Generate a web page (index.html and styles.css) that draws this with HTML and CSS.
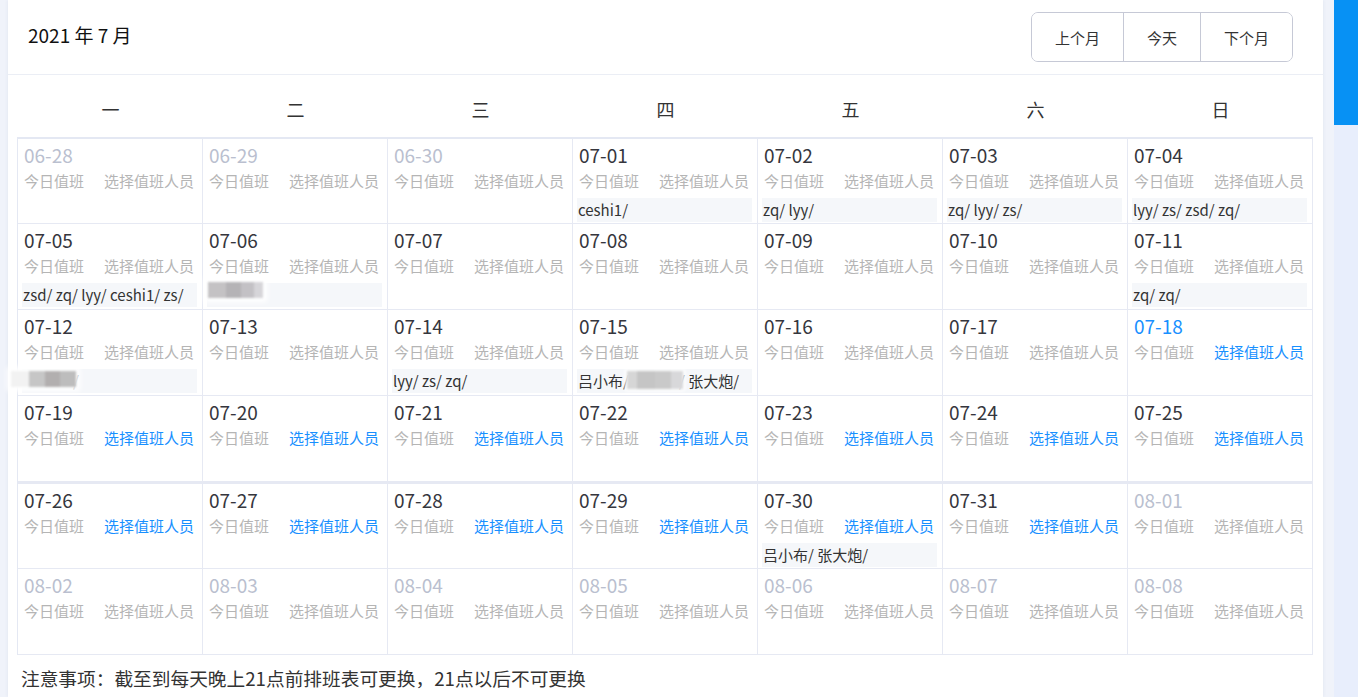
FILE: index.html
```html
<!DOCTYPE html>
<html lang="zh-CN">
<head>
<meta charset="utf-8">
<title>值班日历</title>
<link rel="stylesheet" href="styles.css">
</head>
<body>
<div class="page">
  <main class="card">
    <header class="card-head">
      <div class="title">2021 年 7 月</div>
      <div class="btn-group">
        <button class="btn">上个月</button>
        <button class="btn">今天</button>
        <button class="btn">下个月</button>
      </div>
    </header>
    <div class="card-body">
      <div class="weekdays">
        <div>一</div><div>二</div><div>三</div><div>四</div><div>五</div><div>六</div><div>日</div>
      </div>
      <div class="grid">
        <!-- row 1 -->
        <div class="cell other"><div class="date">06-28</div><div class="duty"><span>今日值班</span><span class="pick">选择值班人员</span></div></div>
        <div class="cell other"><div class="date">06-29</div><div class="duty"><span>今日值班</span><span class="pick">选择值班人员</span></div></div>
        <div class="cell other"><div class="date">06-30</div><div class="duty"><span>今日值班</span><span class="pick">选择值班人员</span></div></div>
        <div class="cell"><div class="date">07-01</div><div class="duty"><span>今日值班</span><span class="pick">选择值班人员</span></div><div class="names">ceshi1/</div></div>
        <div class="cell"><div class="date">07-02</div><div class="duty"><span>今日值班</span><span class="pick">选择值班人员</span></div><div class="names">zq/ lyy/</div></div>
        <div class="cell"><div class="date">07-03</div><div class="duty"><span>今日值班</span><span class="pick">选择值班人员</span></div><div class="names">zq/ lyy/ zs/</div></div>
        <div class="cell"><div class="date">07-04</div><div class="duty"><span>今日值班</span><span class="pick">选择值班人员</span></div><div class="names">lyy/ zs/ zsd/ zq/</div></div>
        <!-- row 2 -->
        <div class="cell"><div class="date">07-05</div><div class="duty"><span>今日值班</span><span class="pick">选择值班人员</span></div><div class="names">zsd/ zq/ lyy/ ceshi1/ zs/</div></div>
        <div class="cell"><div class="date">07-06</div><div class="duty"><span>今日值班</span><span class="pick">选择值班人员</span></div><div class="names"><span class="mosaic m1"></span></div></div>
        <div class="cell"><div class="date">07-07</div><div class="duty"><span>今日值班</span><span class="pick">选择值班人员</span></div></div>
        <div class="cell"><div class="date">07-08</div><div class="duty"><span>今日值班</span><span class="pick">选择值班人员</span></div></div>
        <div class="cell"><div class="date">07-09</div><div class="duty"><span>今日值班</span><span class="pick">选择值班人员</span></div></div>
        <div class="cell"><div class="date">07-10</div><div class="duty"><span>今日值班</span><span class="pick">选择值班人员</span></div></div>
        <div class="cell"><div class="date">07-11</div><div class="duty"><span>今日值班</span><span class="pick">选择值班人员</span></div><div class="names">zq/ zq/</div></div>
        <!-- row 3 -->
        <div class="cell"><div class="date">07-12</div><div class="duty"><span>今日值班</span><span class="pick">选择值班人员</span></div><div class="names"><span class="mosaic m2"></span><span class="tail">/</span></div></div>
        <div class="cell"><div class="date">07-13</div><div class="duty"><span>今日值班</span><span class="pick">选择值班人员</span></div></div>
        <div class="cell"><div class="date">07-14</div><div class="duty"><span>今日值班</span><span class="pick">选择值班人员</span></div><div class="names">lyy/ zs/ zq/</div></div>
        <div class="cell"><div class="date">07-15</div><div class="duty"><span>今日值班</span><span class="pick">选择值班人员</span></div><div class="names">吕小布/<span class="mosaic m3"></span>/ 张大炮/</div></div>
        <div class="cell"><div class="date">07-16</div><div class="duty"><span>今日值班</span><span class="pick">选择值班人员</span></div></div>
        <div class="cell"><div class="date">07-17</div><div class="duty"><span>今日值班</span><span class="pick">选择值班人员</span></div></div>
        <div class="cell today future"><div class="date">07-18</div><div class="duty"><span>今日值班</span><span class="pick">选择值班人员</span></div></div>
        <!-- row 4 -->
        <div class="cell future"><div class="date">07-19</div><div class="duty"><span>今日值班</span><span class="pick">选择值班人员</span></div></div>
        <div class="cell future"><div class="date">07-20</div><div class="duty"><span>今日值班</span><span class="pick">选择值班人员</span></div></div>
        <div class="cell future"><div class="date">07-21</div><div class="duty"><span>今日值班</span><span class="pick">选择值班人员</span></div></div>
        <div class="cell future"><div class="date">07-22</div><div class="duty"><span>今日值班</span><span class="pick">选择值班人员</span></div></div>
        <div class="cell future"><div class="date">07-23</div><div class="duty"><span>今日值班</span><span class="pick">选择值班人员</span></div></div>
        <div class="cell future"><div class="date">07-24</div><div class="duty"><span>今日值班</span><span class="pick">选择值班人员</span></div></div>
        <div class="cell future"><div class="date">07-25</div><div class="duty"><span>今日值班</span><span class="pick">选择值班人员</span></div></div>
        <!-- row 5 -->
        <div class="cell future"><div class="date">07-26</div><div class="duty"><span>今日值班</span><span class="pick">选择值班人员</span></div></div>
        <div class="cell future"><div class="date">07-27</div><div class="duty"><span>今日值班</span><span class="pick">选择值班人员</span></div></div>
        <div class="cell future"><div class="date">07-28</div><div class="duty"><span>今日值班</span><span class="pick">选择值班人员</span></div></div>
        <div class="cell future"><div class="date">07-29</div><div class="duty"><span>今日值班</span><span class="pick">选择值班人员</span></div></div>
        <div class="cell future"><div class="date">07-30</div><div class="duty"><span>今日值班</span><span class="pick">选择值班人员</span></div><div class="names">吕小布/ 张大炮/</div></div>
        <div class="cell future"><div class="date">07-31</div><div class="duty"><span>今日值班</span><span class="pick">选择值班人员</span></div></div>
        <div class="cell other"><div class="date">08-01</div><div class="duty"><span>今日值班</span><span class="pick">选择值班人员</span></div></div>
        <!-- row 6 -->
        <div class="cell other"><div class="date">08-02</div><div class="duty"><span>今日值班</span><span class="pick">选择值班人员</span></div></div>
        <div class="cell other"><div class="date">08-03</div><div class="duty"><span>今日值班</span><span class="pick">选择值班人员</span></div></div>
        <div class="cell other"><div class="date">08-04</div><div class="duty"><span>今日值班</span><span class="pick">选择值班人员</span></div></div>
        <div class="cell other"><div class="date">08-05</div><div class="duty"><span>今日值班</span><span class="pick">选择值班人员</span></div></div>
        <div class="cell other"><div class="date">08-06</div><div class="duty"><span>今日值班</span><span class="pick">选择值班人员</span></div></div>
        <div class="cell other"><div class="date">08-07</div><div class="duty"><span>今日值班</span><span class="pick">选择值班人员</span></div></div>
        <div class="cell other"><div class="date">08-08</div><div class="duty"><span>今日值班</span><span class="pick">选择值班人员</span></div></div>
      </div>
      <p class="note">注意事项：截至到每天晚上21点前排班表可更换，21点以后不可更换</p>
    </div>
  </main>
  <div class="scrollbar"><div class="thumb"></div></div>
</div>
</body>
</html>
```
FILE: styles.css
```css
* { box-sizing: border-box; }
html, body { margin: 0; height: 697px; overflow: hidden; }
body {
  background: #f0f3fa;
  font-family: "Noto Sans CJK SC", "Noto Sans", sans-serif;
  color: #333;
}
.page {
  display: flex;
  height: 697px;
  padding-left: 8px;
  gap: 11px;
}
.card {
  width: 1315px;
  flex: none;
  background: #fff;
  box-shadow: 0 0 4px rgba(40, 60, 120, 0.08);
}
.card-head {
  height: 75px;
  padding: 12px 30px 12px 20px;
  display: flex;
  align-items: center;
  justify-content: space-between;
  border-bottom: 1px solid #ebeef5;
}
.title {
  font-size: 19px;
  line-height: 26px;
  color: #111;
  margin-bottom: 4px;
}
.btn-group {
  display: flex;
  height: 50px;
  border: 1px solid #c6c9d6;
  border-radius: 7px;
  overflow: hidden;
}
.btn {
  font-family: inherit;
  font-size: 15px;
  color: #333;
  background: #fff;
  border: none;
  margin: 0;
  padding: 0 23px;
  cursor: pointer;
}
.btn + .btn { border-left: 1px solid #c6c9d6; }

.card-body { padding: 0 10px 0 9px; }
.weekdays {
  height: 62px;
  padding: 21px 0 0 1px;
  display: grid;
  grid-template-columns: repeat(7, 1fr);
  font-size: 18px;
  line-height: 26px;
  text-align: center;
  color: #333;
}
.grid {
  display: grid;
  grid-template-columns: repeat(7, 1fr);
  grid-template-rows: 85px 86px 86px 86px 87px 86px;
  border-top: 2px solid #e4e8f3;
  border-left: 1px solid #e4e8f3;
}
.cell {
  min-width: 0;
  border-right: 1px solid #e6e9f3;
  border-bottom: 1px solid #e6e9f3;
  padding: 0 5px 0 4px;
}
.cell:nth-child(n+29):nth-child(-n+35) { border-top: 2px solid #e6e9f3; }
.date {
  font-size: 19px;
  line-height: 30px;
  margin-top: 1px;
  padding-left: 2px;
  color: #35363d;
}
.duty {
  display: flex;
  white-space: nowrap;
  font-size: 15px;
  line-height: 24px;
  margin-top: -1px;
  padding-left: 2px;
  color: #b5b5b5;
}
.duty .pick { margin-left: 20px; }
.cell.other .date { color: #babfcf; }
.cell.today .date { color: #1890ff; }
.cell.future .pick { color: #1890ff; }
.names {
  margin-top: 5px;
  height: 24px;
  line-height: 24px;
  background: #f5f7fa;
  font-size: 15px;
  color: #333;
  white-space: nowrap;
  padding-left: 1px;
}
.mosaic {
  display: inline-block;
  position: relative;
  z-index: 1;
  vertical-align: top;
  filter: blur(1px);
}
.m1 {
  width: 55px;
  height: 16px;
  margin-top: -1px;
  background: linear-gradient(90deg, #c4c2c4 0 18px, #b5b3b6 18px 33px, #c3c1c5 33px 46px, #d6d5d9 46px 55px);
  box-shadow: 0 0 5px 4px #fff;
}
.m2 {
  width: 65px;
  height: 16px;
  margin: 2px 0 0 -12px;
  background: linear-gradient(90deg, #f2f2f2 0 18px, #c6c6c6 18px 34px, #b2afaf 34px 49px, #bdbdbd 49px 65px);
  box-shadow: 0 0 5px 4px #fff;
}
.tail { margin-left: -3px; }
.m3 {
  width: 56px;
  height: 18px;
  margin: 2px -4px 0 -2px;
  background: linear-gradient(90deg, #d6d6d6 0 10px, #c5c5c5 10px 28px, #c9c9c9 28px 44px, #d8d8da 44px 56px);
  box-shadow: 0 0 3px 2px #fff;
}
.note {
  margin: 0;
  padding: 10px 0 0 4px;
  font-size: 18.7px;
  line-height: 26px;
  color: #333;
}
.scrollbar {
  width: 24px;
  flex: none;
  background: #e8eefc;
}
.thumb {
  height: 125px;
  background: #0791f4;
}
```
